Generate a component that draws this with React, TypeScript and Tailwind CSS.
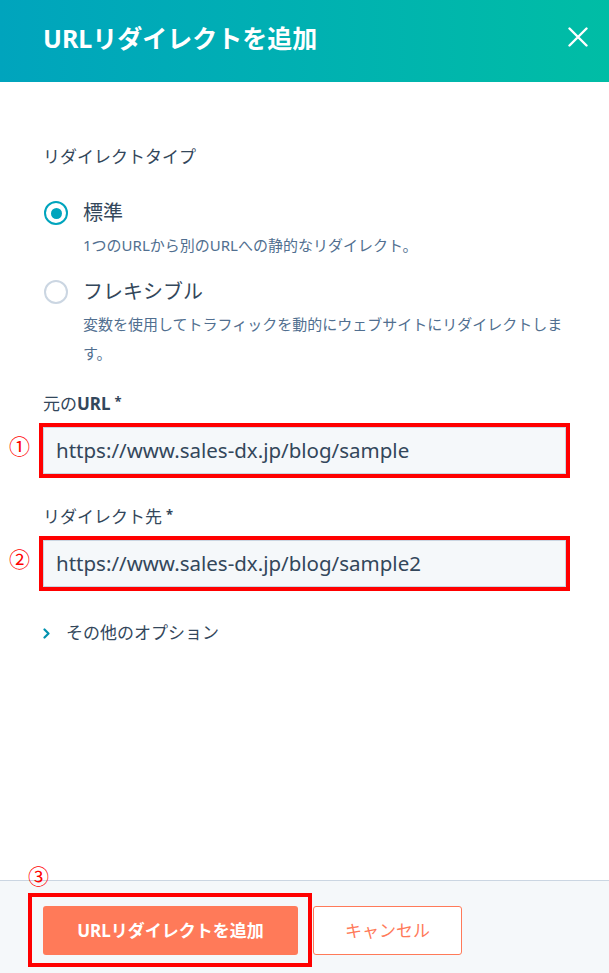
import { ReactNode } from "react";

const font = "font-['Noto_Sans','Noto_Sans_CJK_JP',sans-serif]";

function Radio({ checked }: { checked?: boolean }) {
  return (
    <span
      className={
        "flex h-6 w-6 shrink-0 items-center justify-center rounded-full border-2 bg-white " +
        (checked ? "border-[#00a4bd]" : "border-[#cbd6e2]")
      }
    >
      {checked && <span className="h-[11px] w-[11px] rounded-full bg-[#00a4bd]" />}
    </span>
  );
}

function RadioOption({
  checked,
  label,
  children,
}: {
  checked?: boolean;
  label: string;
  children: ReactNode;
}) {
  return (
    <div>
      <div className="flex items-center gap-[15px] pl-[1px]">
        <Radio checked={checked} />
        <span className="text-[20px] leading-[28px] text-[#33475b]">{label}</span>
      </div>
      <p className="mt-[4px] pl-[40px] text-[15px] leading-[29px] text-[#516f90]">{children}</p>
    </div>
  );
}

function Marker({ children }: { children: ReactNode }) {
  return (
    <span className="absolute text-[21px] leading-none text-[#ff0000] font-['Noto_Sans_CJK_JP',sans-serif]">
      {children}
    </span>
  );
}

function UrlField({ label, value, mark }: { label: ReactNode; value: string; mark: string }) {
  return (
    <div>
      <div className="text-[17px] leading-[24px] text-[#33475b]">
        {label}
        <span className="relative -top-[4px] ml-[4px] text-[13px] font-bold">*</span>
      </div>
      <div className="relative mt-[10px]">
        <div className="-left-[34px] top-[8px] absolute">
          <Marker>{mark}</Marker>
        </div>
        <div className="flex h-[47px] items-center border border-[#cbd6e2] bg-[#f5f8fa] px-[12px] text-[20.5px] text-[#33475b] outline-4 outline-[#ff0000]">
          {value}
        </div>
      </div>
    </div>
  );
}

export default function App() {
  return (
    <div className={"flex h-[973px] w-full flex-col overflow-hidden bg-white " + font}>
      <header className="flex h-[82px] shrink-0 items-center justify-between bg-gradient-to-r from-[#00a4bd] to-[#00bda5] pl-[43px] pr-[21px]">
        <h1 className="pb-[4px] text-[25px] font-bold text-white">URLリダイレクトを追加</h1>
        <button className="mb-[9px] text-white" aria-label="close">
          <svg width="20" height="20" viewBox="0 0 20 20" fill="none" stroke="currentColor" strokeWidth="2.4" strokeLinecap="round">
            <path d="M1.5 1.5 18.5 18.5M18.5 1.5 1.5 18.5" />
          </svg>
        </button>
      </header>

      <main className="flex-1 pl-[43px] pr-[43px] pt-[63px]">
        <div className="text-[17px] leading-[24px] text-[#33475b]">リダイレクトタイプ</div>

        <div className="mt-[30px] flex flex-col gap-[18px]">
          <RadioOption checked label="標準">
            1つのURLから別のURLへの静的なリダイレクト。
          </RadioOption>
          <RadioOption label="フレキシブル">
            変数を使用してトラフィックを動的にウェブサイトにリダイレクトします。
          </RadioOption>
        </div>

        <div className="mt-[24px] flex flex-col gap-[31px]">
          <UrlField
            mark="①"
            value="https://www.sales-dx.jp/blog/sample"
            label={
              <>
                元の<span className="font-bold">URL</span>
              </>
            }
          />
          <UrlField mark="②" value="https://www.sales-dx.jp/blog/sample2" label="リダイレクト先" />
        </div>

        <button className="mt-[34px] flex items-center gap-[16px] text-[17px] leading-[24px] text-[#33475b]">
          <svg width="7" height="11" viewBox="0 0 7 11" fill="none" stroke="#0091ae" strokeWidth="2.2" strokeLinecap="round" strokeLinejoin="round">
            <path d="M1.5 1.5 5.5 5.5 1.5 9.5" />
          </svg>
          その他のオプション
        </button>
      </main>

      <footer className="relative h-[93px] shrink-0 border-t border-[#cbd6e2] bg-[#f5f8fa] pl-[43px] pt-[25px]">
        <div className="absolute left-[28px] -top-[16px]">
          <Marker>③</Marker>
        </div>
        <div className="flex gap-[15px]">
          <div className="relative">
            <span className="absolute -left-[15px] -right-[14px] -top-[13px] -bottom-[12px] border-4 border-[#ff0000]" />
            <button className="relative h-[49px] w-[255px] rounded-[3px] bg-[#ff7a59] text-[17px] font-bold text-white">
              URLリダイレクトを追加
            </button>
          </div>
          <button className="h-[49px] w-[149px] rounded-[3px] border border-[#ff7a59] bg-white text-[17px] text-[#ff7a59]">
            キャンセル
          </button>
        </div>
      </footer>
    </div>
  );
}
